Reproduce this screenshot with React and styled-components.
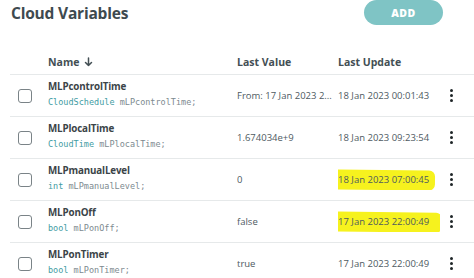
import React from 'react';
import styled, { createGlobalStyle } from 'styled-components';

const Global = createGlobalStyle`
  body {
    margin: 0;
    background: #ffffff;
    font-family: 'Open Sans', 'Liberation Sans', sans-serif;
    color: #434f54;
  }
`;

const Page = styled.div`
  width: 474px;
  height: 278px;
  overflow: hidden;
  padding: 0 0 0 10px;
  box-sizing: border-box;
`;

const TopBar = styled.div`
  display: flex;
  align-items: flex-start;
  justify-content: space-between;
  height: 50px;
  padding-right: 31px;
`;

const Title = styled.h1`
  margin: 3px 0 0 1px;
  font-size: 15.5px;
  line-height: 21px;
  font-weight: 700;
  color: #3e4a4f;
  letter-spacing: -0.2px;
`;

const AddButton = styled.button`
  width: 79px;
  height: 25px;
  border: none;
  border-radius: 13px;
  background: #7fc4c5;
  color: #ffffff;
  font-family: 'Open Sans', sans-serif;
  font-weight: 800;
  font-size: 10.5px;
  letter-spacing: 0.5px;
`;

const Grid = styled.div`
  display: grid;
  grid-template-columns: 38px 189px 101px 102px 1fr;
  align-items: center;
  height: ${p => p.h}px;
  border-bottom: 1px solid #e6e9ea;
`;

const HeadCell = styled.div`
  font-size: 10.5px;
  font-weight: 700;
  color: #434f54;
  display: flex;
  align-items: center;
  gap: 5px;
`;

const Box = styled.span`
  display: block;
  width: 12px;
  height: 12px;
  margin-left: 8px;
  border: 1.3px solid #7a8387;
  border-radius: 3px;
`;

const NameCell = styled.div`
  display: flex;
  flex-direction: column;
  gap: 4px;
  margin-top: -3px;
`;

const VarName = styled.div`
  font-size: 9.8px;
  font-weight: 700;
  color: #3b4448;
  line-height: 13px;
  letter-spacing: -0.15px;
`;

const Code = styled.div`
  font-family: 'DejaVu Sans Mono', 'Liberation Mono', monospace;
  font-size: 8.5px;
  color: #7d8a8f;
  line-height: 11px;
`;

const Type = styled.span`
  color: #3f9ca3;
`;

const Text = styled.div`
  font-size: 9.5px;
  color: #4e5a5f;
  white-space: nowrap;
  overflow: hidden;
  padding: 4px 0;
`;

const Marked = styled.span`
  position: relative;
  z-index: 0;
  &::before {
    content: '';
    position: absolute;
    z-index: -1;
    left: ${p => p.l}px;
    right: ${p => p.r}px;
    top: -3px;
    bottom: -4px;
    background: #f6f21e;
    border-radius: 6px;
    transform: rotate(${p => p.rot}deg);
  }
`;

const Kebab = styled.div`
  display: flex;
  flex-direction: column;
  gap: 2px;
  margin-left: 10px;
  span {
    width: 3px;
    height: 3px;
    border-radius: 50%;
    background: #1f2628;
  }
`;

const rows = [
  { name: 'MLPcontrolTime', type: 'CloudSchedule', v: 'mLPcontrolTime', value: 'From: 17 Jan 2023 2...', upd: '18 Jan 2023 00:01:43' },
  { name: 'MLPlocalTime', type: 'CloudTime', v: 'mLPlocalTime', value: '1.674034e+9', upd: '18 Jan 2023 09:23:54' },
  { name: 'MLPmanualLevel', type: 'int', v: 'mLPmanualLevel', value: '0', upd: '18 Jan 2023 07:00:45', mark: { l: -8, r: -6, rot: 0.6 } },
  { name: 'MLPonOff', type: 'bool', v: 'mLPonOff', value: 'false', upd: '17 Jan 2023 22:00:49', mark: { l: -17, r: -13, rot: 0.8 } },
  { name: 'MLPonTimer', type: 'bool', v: 'mLPonTimer', value: 'true', upd: '17 Jan 2023 22:00:49' },
];

export default function App() {
  return (
    <Page>
      <Global />
      <TopBar>
        <Title>Cloud Variables</Title>
        <AddButton>ADD</AddButton>
      </TopBar>
      <Grid h={24}>
        <div />
        <HeadCell>
          Name
          <svg width="9" height="10" viewBox="0 0 9 10" fill="none" stroke="#434f54" strokeWidth="1.5" strokeLinecap="round" strokeLinejoin="round">
            <path d="M4.5 1v7.5M1.5 5.5l3 3 3-3" />
          </svg>
        </HeadCell>
        <HeadCell>Last Value</HeadCell>
        <HeadCell>Last Update</HeadCell>
        <div />
      </Grid>
      {rows.map(r => (
        <Grid h={41} key={r.name}>
          <Box />
          <NameCell>
            <VarName>{r.name}</VarName>
            <Code>
              <Type>{r.type}</Type> {r.v};
            </Code>
          </NameCell>
          <Text>{r.value}</Text>
          <Text>{r.mark ? <Marked {...r.mark}>{r.upd}</Marked> : r.upd}</Text>
          <Kebab>
            <span />
            <span />
            <span />
          </Kebab>
        </Grid>
      ))}
    </Page>
  );
}
